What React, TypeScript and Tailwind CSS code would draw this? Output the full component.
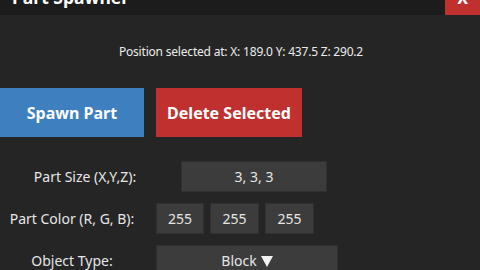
import React from "react";

const font = { fontFamily: '"Noto Sans", "Open Sans", sans-serif' };

export default function App() {
  return (
    <div className="w-[480px] h-[270px] overflow-hidden bg-[#252525] text-[#e6e6e6] flex flex-col" style={font}>
      <div className="h-[15px] bg-[#1c1c1c] flex items-start justify-between shrink-0 overflow-hidden">
        <span className="block pl-[12px] text-[17.5px] font-bold text-white leading-none -mt-[11px]">Part Spawner</span>
        <div className="w-[35px] h-[15px] bg-[#c0302f] flex justify-center items-start overflow-hidden">
          <span className="block text-[16px] font-bold text-white leading-none -mt-[10px]">X</span>
        </div>
      </div>
      <div className="flex justify-center pt-[31px] text-[12px] tracking-[-0.2px] leading-[12px] pl-[2px] text-[#ececec]">
        Position selected at: X: 189.0 Y: 437.5 Z: 290.2
      </div>
      <div className="flex gap-[12px] mt-[30px]">
        <button className="w-[144px] h-[49px] bg-[#3d7fbf] text-white font-bold text-[16px]">Spawn Part</button>
        <button className="w-[146px] h-[49px] bg-[#c0302f] text-white font-bold text-[16px]">Delete Selected</button>
      </div>
      <div className="flex items-center mt-[24px]">
        <div className="w-[170px] text-center text-[14px]">Part Size (X,Y,Z):</div>
        <div className="ml-[11px] w-[146px] h-[31px] bg-[#3c3c3c] border border-[#303030] flex items-center justify-center text-[14px]">3, 3, 3</div>
      </div>
      <div className="flex items-center mt-[11px]">
        <div className="w-[144px] text-center text-[14px]">Part Color (R, G, B):</div>
        <div className="ml-[12px] flex gap-[6px]">
          <div className="w-[48px] h-[31px] bg-[#3c3c3c] border border-[#303030] flex items-center justify-center text-[14px]">255</div>
          <div className="w-[49px] h-[31px] bg-[#3c3c3c] border border-[#303030] flex items-center justify-center text-[14px]">255</div>
          <div className="w-[49px] h-[31px] bg-[#3c3c3c] border border-[#303030] flex items-center justify-center text-[14px]">255</div>
        </div>
      </div>
      <div className="flex items-center mt-[11px]">
        <div className="w-[144px] text-center text-[14px]">Object Type:</div>
        <div className="ml-[12px] w-[182px] h-[31px] bg-[#3c3c3c] border border-[#303030] flex items-center justify-center gap-[4px] text-[14px]">
          <span>Block</span>
          <svg width="12" height="11" viewBox="0 0 12 11" className="mt-[1px]">
            <polygon points="0,0 12,0 6,11" fill="#f2f2f2" />
          </svg>
        </div>
      </div>
    </div>
  );
}
